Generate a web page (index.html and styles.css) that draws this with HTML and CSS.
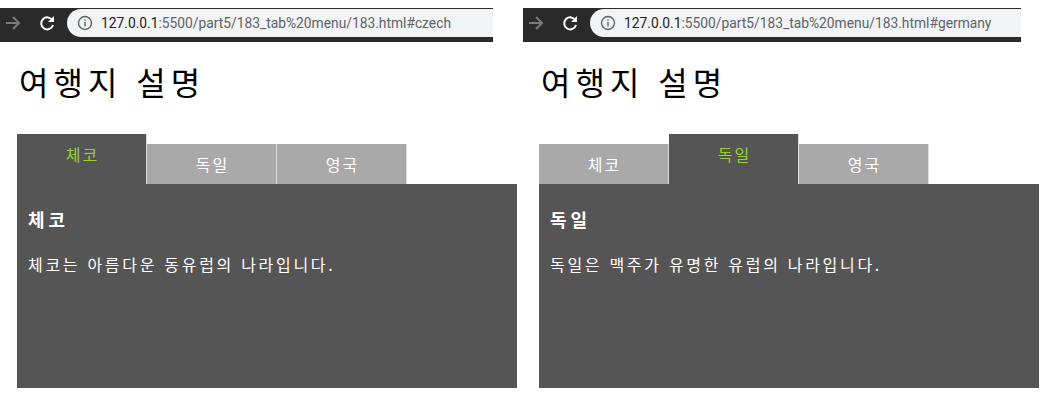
FILE: index.html
```html
<!DOCTYPE html>
<html lang="ko">
<head>
    <meta charset="UTF-8">
    <meta name="viewport" content="width=device-width, initial-scale=1.0">
    <title>여행지 설명</title>
    <link rel="stylesheet" href="styles.css">
</head>
<body>
    <div class="window czech">
        <div class="bar">
            <svg class="icon back" width="20" height="20" viewBox="0 0 20 20">
                <path d="M3 10h13M10 4l6 6-6 6" fill="none" stroke="#7a7a7a" stroke-width="2"/>
            </svg>
            <svg class="icon reload" width="20" height="20" viewBox="0 0 20 20">
                <path d="M15.5 7.5A6 6 0 1 0 16 12" fill="none" stroke="#fff" stroke-width="2"/>
                <path d="M17 3v6h-6z" fill="#fff"/>
            </svg>
            <div class="address">
                <svg class="info" width="16" height="16" viewBox="0 0 16 16">
                    <circle cx="8" cy="8" r="6.5" fill="none" stroke="#5f6368" stroke-width="1.4"/>
                    <rect x="7.3" y="7" width="1.4" height="4.5" fill="#5f6368"/>
                    <rect x="7.3" y="4.3" width="1.4" height="1.4" fill="#5f6368"/>
                </svg>
                <span class="host">127.0.0.1</span><span class="path">:5500/part5/183_tab%20menu/183.html#czech</span>
            </div>
        </div>
        <div class="page">
            <h1>여행지 설명</h1>
            <ul class="tabs">
                <li class="active">체코</li>
                <li>독일</li>
                <li>영국</li>
            </ul>
            <div class="content">
                <h3>체코</h3>
                <p>체코는 아름다운 동유럽의 나라입니다.</p>
            </div>
        </div>
    </div>

    <div class="window germany">
        <div class="bar">
            <svg class="icon back" width="20" height="20" viewBox="0 0 20 20">
                <path d="M3 10h13M10 4l6 6-6 6" fill="none" stroke="#7a7a7a" stroke-width="2"/>
            </svg>
            <svg class="icon reload" width="20" height="20" viewBox="0 0 20 20">
                <path d="M15.5 7.5A6 6 0 1 0 16 12" fill="none" stroke="#fff" stroke-width="2"/>
                <path d="M17 3v6h-6z" fill="#fff"/>
            </svg>
            <div class="address">
                <svg class="info" width="16" height="16" viewBox="0 0 16 16">
                    <circle cx="8" cy="8" r="6.5" fill="none" stroke="#5f6368" stroke-width="1.4"/>
                    <rect x="7.3" y="7" width="1.4" height="4.5" fill="#5f6368"/>
                    <rect x="7.3" y="4.3" width="1.4" height="1.4" fill="#5f6368"/>
                </svg>
                <span class="host">127.0.0.1</span><span class="path">:5500/part5/183_tab%20menu/183.html#germany</span>
            </div>
        </div>
        <div class="page">
            <h1>여행지 설명</h1>
            <ul class="tabs">
                <li>체코</li>
                <li class="active">독일</li>
                <li>영국</li>
            </ul>
            <div class="content">
                <h3>독일</h3>
                <p>독일은 맥주가 유명한 유럽의 나라입니다.</p>
            </div>
        </div>
    </div>
</body>
</html>
```

FILE: styles.css
```css
html{
    font-family: "Noto Sans CJK KR", "Noto Sans", sans-serif;
}

body{
    margin: 0;
    display: flex;
    background-color: white;
}

.window{
    padding-top: 8px;
}

.czech{
    width: 523px;
}

.germany{
    width: 534px;
}

.bar{
    height: 34px;
    background-color: #2a2a2a;
    display: flex;
    align-items: flex-start;
}

.czech .bar{
    width: 493px;
}

.germany .bar{
    width: 498px;
}

.icon{
    margin-top: 5px;
}

.back{
    margin-left: 3px;
}

.reload{
    margin-left: 14px;
}

.address{
    flex: 1;
    height: 28px;
    margin-top: 1px;
    margin-left: 10px;
    background-color: #f1f3f4;
    border-radius: 14px 0 0 14px;
    display: flex;
    align-items: center;
    font-family: Roboto, "Liberation Sans", sans-serif;
    font-size: 13.8px;
    white-space: nowrap;
    overflow: hidden;
}

.info{
    margin-left: 10px;
    margin-right: 8px;
}

.host{
    color: #202124;
}

.path{
    color: #5f6368;
}

.page{
    padding-left: 17px;
}

.germany .page{
    padding-left: 16px;
}

h1{
    margin: 16px 0 0 2px;
    font-size: 32px;
    font-weight: normal;
    color: black;
    line-height: 46px;
    letter-spacing: 5px;
}

.tabs{
    list-style: none;
    margin: 30px 0 0;
    padding: 0;
    display: flex;
    align-items: flex-end;
    height: 50px;
}

.tabs li{
    width: 129px;
    height: 40px;
    line-height: 40px;
    border-right: 1px solid #dcdcdc;
    background-color: #a9a9a9;
    color: white;
    text-align: center;
    font-size: 16px;
    letter-spacing: 2px;
    text-indent: 2px;
}

.tabs li.active{
    height: 50px;
    background-color: #555;
    color: #9acd32;
}

.content{
    width: 500px;
    height: 204px;
    box-sizing: border-box;
    padding: 20px 11px;
    background-color: #555;
    color: white;
}

.content h3{
    margin: 0;
    font-size: 18px;
    line-height: 30px;
    letter-spacing: 4px;
}

.content p{
    margin: 18px 0 0;
    font-size: 16px;
    line-height: 24px;
    letter-spacing: 2.7px;
}
```
